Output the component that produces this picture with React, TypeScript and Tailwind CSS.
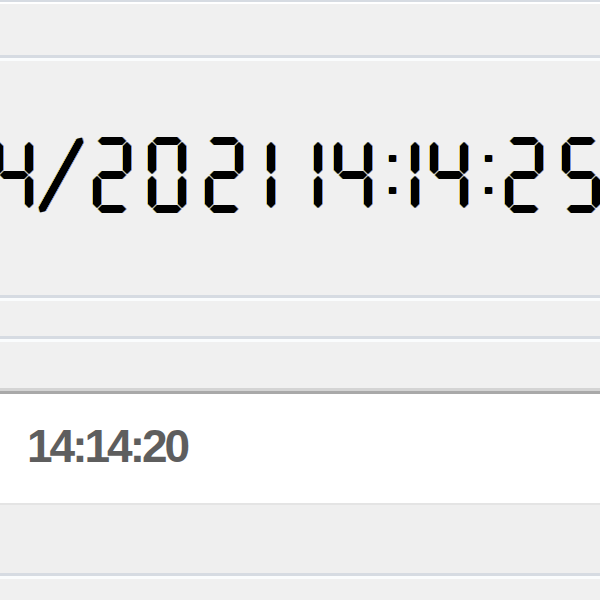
const H_CLIP =
  "[clip-path:polygon(4px_0,calc(100%_-_4px)_0,100%_50%,calc(100%_-_4px)_100%,4px_100%,0_50%)]";
const V_CLIP =
  "[clip-path:polygon(50%_0,100%_4px,100%_calc(100%_-_4px),50%_100%,0_calc(100%_-_4px),0_4px)]";

// segment boxes for a 38x76 cell, 8px strokes
const SEGMENTS: Record<string, string> = {
  a: `left-[5px] top-0 h-[8px] w-[28px] ${H_CLIP}`,
  g: `left-[5px] top-[34px] h-[8px] w-[28px] ${H_CLIP}`,
  d: `left-[5px] top-[68px] h-[8px] w-[28px] ${H_CLIP}`,
  f: `left-0 top-[5px] h-[32px] w-[8px] ${V_CLIP}`,
  e: `left-0 top-[39px] h-[32px] w-[8px] ${V_CLIP}`,
  b: `right-0 top-[5px] h-[32px] w-[8px] ${V_CLIP}`,
  c: `right-0 top-[39px] h-[32px] w-[8px] ${V_CLIP}`,
};

const DIGITS: Record<string, string[]> = {
  "0": ["a", "b", "c", "d", "e", "f"],
  "1": ["b", "c"],
  "2": ["a", "b", "g", "e", "d"],
  "4": ["f", "g", "b", "c"],
  "5": ["a", "f", "g", "c", "d"],
};

type Glyph = { ch: string; ml: string };

const glyphs: Glyph[] = [
  { ch: "4", ml: "-ml-[5px]" },
  { ch: "/", ml: "ml-[4px]" },
  { ch: "2", ml: "ml-[8px]" },
  { ch: "0", ml: "ml-[17px]" },
  { ch: "2", ml: "ml-[19px]" },
  { ch: "1", ml: "ml-[24px]" },
  { ch: "1", ml: "ml-[39px]" },
  { ch: "4", ml: "ml-[12px]" },
  { ch: ":", ml: "ml-[17px]" },
  { ch: "1", ml: "ml-[15px]" },
  { ch: "4", ml: "ml-[11px]" },
  { ch: ":", ml: "ml-[17px]" },
  { ch: "2", ml: "ml-[13px]" },
  { ch: "5", ml: "ml-[19px]" },
];

function SegmentGlyph({ ch, ml }: Glyph) {
  if (ch === "/") {
    return (
      <div className={`relative h-[76px] w-[48px] shrink-0 ${ml}`}>
        <div
          className={`absolute left-[20px] top-[-5px] h-[86px] w-[8px] rotate-[29deg] bg-black ${V_CLIP}`}
        />
      </div>
    );
  }

  if (ch === ":") {
    return (
      <div className={`relative h-[76px] w-[7px] shrink-0 ${ml}`}>
        <div className="absolute left-0 top-[18px] h-[7px] w-[7px] rounded-[1px] bg-black" />
        <div className="absolute left-0 top-[50px] h-[7px] w-[7px] rounded-[1px] bg-black" />
      </div>
    );
  }

  const width = ch === "1" ? "w-[8px]" : "w-[38px]";

  return (
    <div className={`relative h-[76px] shrink-0 ${width} ${ml}`}>
      {DIGITS[ch].map((seg) => (
        <div key={seg} className={`absolute bg-black ${SEGMENTS[seg]}`} />
      ))}
    </div>
  );
}

function Separator() {
  return (
    <div>
      <div className="h-[3px] bg-[#d6dbe2]" />
      <div className="h-[3px] bg-[#fafcfd]" />
    </div>
  );
}

export default function App() {
  return (
    <div className="h-[600px] w-[600px] overflow-hidden bg-[#f0f0f0] font-['Liberation_Sans',Arial,sans-serif]">
      <div className="h-[2px] bg-[#d6dbe2]" />
      <div className="h-[2px] bg-white" />
      <div className="h-[51px]" />

      <Separator />

      <section className="h-[234px] pt-[76px]">
        <span className="sr-only">4/2021 14:14:25</span>
        <div
          aria-hidden="true"
          className="flex [filter:drop-shadow(-1px_0_0_rgba(225,165,0,0.6))_drop-shadow(1px_0_0_rgba(20,90,220,0.6))]"
        >
          {glyphs.map((glyph, i) => (
            <SegmentGlyph key={i} ch={glyph.ch} ml={glyph.ml} />
          ))}
        </div>
      </section>

      <Separator />
      <div className="h-[35px]" />
      <Separator />
      <div className="h-[46px]" />

      <div className="h-[3px] bg-[#d4d4d4]" />
      <div className="h-[3px] bg-[#a9a9a9]" />

      <div className="h-[109px] bg-white pl-[27px] pt-[29px]">
        <div className="text-[46px] font-bold leading-none tracking-[-3px] text-[#5e5e5e]">
          14:14:20
        </div>
      </div>
      <div className="h-[2px] bg-[#e4e4e4]" />
      <div className="h-[68px] bg-[#efefef]" />

      <Separator />
    </div>
  );
}
